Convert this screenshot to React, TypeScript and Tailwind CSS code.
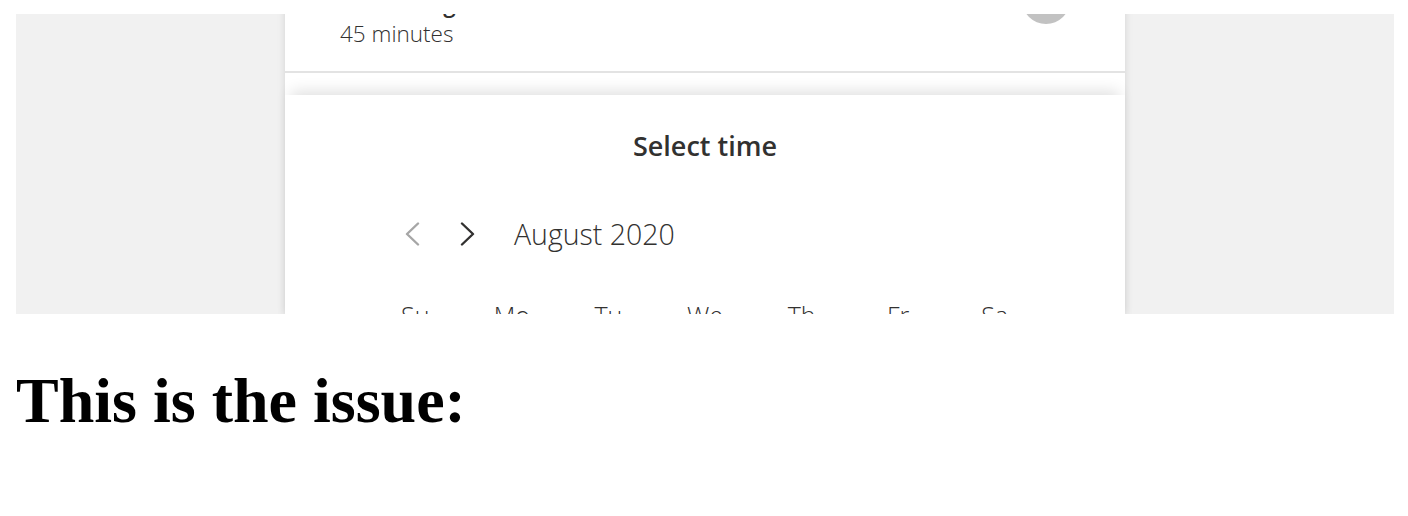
const DAYS = ["Su", "Mo", "Tu", "We", "Th", "Fr", "Sa"];

function Chevron({ dir }: { dir: "left" | "right" }) {
  return (
    <svg width="16" height="24" viewBox="0 0 16 24" fill="none" stroke="currentColor" strokeWidth="2.4" strokeLinecap="round" strokeLinejoin="round">
      <polyline points={dir === "left" ? "14,1.5 3,12 14,22.5" : "2,1.5 13,12 2,22.5"} />
    </svg>
  );
}

function BookingCard() {
  return (
    <div className="-mt-[62px] w-[840px] shrink-0 bg-white shadow-[0_0_8px_rgba(0,0,0,0.12)]">
      <div className="flex items-start justify-between px-[55px] pt-[24px] pb-[22px]">
        <div className="pt-[13px] text-[22.5px] leading-[30px] text-[#323130]">
          <p className="font-semibold">Consulting</p>
          <p className="font-light">45 minutes</p>
        </div>
        <div className="h-[48px] w-[48px] rounded-full bg-[#c2c2c2]" />
      </div>
      <div className="h-[2px] bg-[#e3e3e3]" />
      <div className="h-[22px]" />
      <div className="relative bg-white pt-[33px] shadow-[0_-10px_14px_-6px_rgba(0,0,0,0.12)]">
        <h2 className="text-center text-[27px] font-semibold leading-[36px] text-[#323130]">
          Select time
        </h2>
        <div className="mx-auto w-[676px]">
          <div className="mt-[52px] flex h-[36px] items-center pl-[37px]">
            <button className="flex h-[36px] w-[16px] items-center justify-center text-[#a6a6a6]">
              <Chevron dir="left" />
            </button>
            <button className="ml-[40px] flex h-[36px] w-[16px] items-center justify-center text-[#323130]">
              <Chevron dir="right" />
            </button>
            <span className="ml-[38px] text-[28.5px] font-light leading-[36px] text-[#323130]">
              August 2020
            </span>
          </div>
          <div className="mt-[48px] grid grid-cols-7">
            {DAYS.map((d) => (
              <span key={d} className="text-center text-[25px] font-light leading-[30px] text-[#323130]">
                {d}
              </span>
            ))}
          </div>
          <div className="h-[200px]" />
        </div>
      </div>
    </div>
  );
}

export default function App() {
  return (
    <div className="min-h-[516px] bg-white pt-[14px] pr-[14px] pl-[16px] font-['Open_Sans',sans-serif]">
      <div className="flex h-[300px] justify-center overflow-hidden bg-[#f1f1f1]">
        <BookingCard />
      </div>
      <h1 className="mt-[50px] font-['Liberation_Serif',serif] text-[64px] font-bold leading-[74px] text-black">
        This is the issue:
      </h1>
    </div>
  );
}
